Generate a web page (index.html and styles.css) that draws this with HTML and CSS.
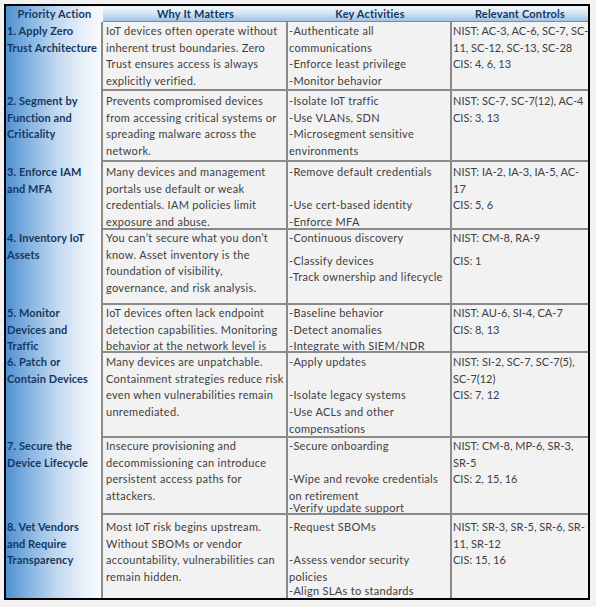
FILE: index.html
```html
<!DOCTYPE html>
<html>
<head>
<meta charset="utf-8">
<link rel="stylesheet" href="styles.css">
</head>
<body>
<div class="sheet">
  <div class="row head">
    <div class="cell c1 h">Priority Action</div>
    <div class="cell hx h">Why It Matters</div>
    <div class="cell hx h">Key Activities</div>
    <div class="cell hx h">Relevant Controls</div>
  </div>

  <div class="row r1">
    <div class="cell c1"><p>1. Apply Zero</p><p>Trust Architecture</p></div>
    <div class="cell c2"><p>IoT devices often operate without</p><p>inherent trust boundaries. Zero</p><p>Trust ensures access is always</p><p>explicitly verified.</p></div>
    <div class="cell c3"><p>-Authenticate all</p><p>communications</p><p>-Enforce least privilege</p><p>-Monitor behavior</p></div>
    <div class="cell c4"><p>NIST: AC-3, AC-6, SC-7, SC-</p><p>11, SC-12, SC-13, SC-28</p><p>CIS: 4, 6, 13</p></div>
  </div>

  <div class="row r2">
    <div class="cell c1"><p>2. Segment by</p><p>Function and</p><p>Criticality</p></div>
    <div class="cell c2"><p>Prevents compromised devices</p><p>from accessing critical systems or</p><p>spreading malware across the</p><p>network.</p></div>
    <div class="cell c3"><p>-Isolate IoT traffic</p><p>-Use VLANs, SDN</p><p>-Microsegment sensitive</p><p>environments</p></div>
    <div class="cell c4"><p>NIST: SC-7, SC-7(12), AC-4</p><p>CIS: 3, 13</p></div>
  </div>

  <div class="row r3">
    <div class="cell c1"><p>3. Enforce IAM</p><p>and MFA</p></div>
    <div class="cell c2"><p>Many devices and management</p><p>portals use default or weak</p><p>credentials. IAM policies limit</p><p>exposure and abuse.</p></div>
    <div class="cell c3"><p>-Remove default credentials</p><p class="blank"></p><p>-Use cert-based identity</p><p>-Enforce MFA</p></div>
    <div class="cell c4"><p>NIST: IA-2, IA-3, IA-5, AC-</p><p>17</p><p>CIS: 5, 6</p></div>
  </div>

  <div class="row r4">
    <div class="cell c1"><p>4. Inventory IoT</p><p>Assets</p></div>
    <div class="cell c2"><p>You can’t secure what you don’t</p><p>know. Asset inventory is the</p><p>foundation of visibility,</p><p>governance, and risk analysis.</p></div>
    <div class="cell c3"><p>-Continuous discovery</p><p class="gap">-Classify devices</p><p>-Track ownership and lifecycle</p></div>
    <div class="cell c4"><p>NIST: CM-8, RA-9</p><p class="gap">CIS: 1</p></div>
  </div>

  <div class="row r5">
    <div class="cell c1"><p>5. Monitor</p><p>Devices and</p><p>Traffic</p></div>
    <div class="cell c2"><p>IoT devices often lack endpoint</p><p>detection capabilities. Monitoring</p><p>behavior at the network level is</p></div>
    <div class="cell c3"><p>-Baseline behavior</p><p>-Detect anomalies</p><p>-Integrate with SIEM/NDR</p></div>
    <div class="cell c4"><p>NIST: AU-6, SI-4, CA-7</p><p>CIS: 8, 13</p></div>
  </div>

  <div class="row r6">
    <div class="cell c1"><p>6. Patch or</p><p>Contain Devices</p></div>
    <div class="cell c2"><p>Many devices are unpatchable.</p><p>Containment strategies reduce risk</p><p>even when vulnerabilities remain</p><p>unremediated.</p></div>
    <div class="cell c3"><p>-Apply updates</p><p class="blank"></p><p>-Isolate legacy systems</p><p>-Use ACLs and other</p><p>compensations</p></div>
    <div class="cell c4"><p>NIST: SI-2, SC-7, SC-7(5),</p><p>SC-7(12)</p><p>CIS: 7, 12</p></div>
  </div>

  <div class="row r7">
    <div class="cell c1"><p>7. Secure the</p><p>Device Lifecycle</p></div>
    <div class="cell c2"><p>Insecure provisioning and</p><p>decommissioning can introduce</p><p>persistent access paths for</p><p>attackers.</p></div>
    <div class="cell c3"><p>-Secure onboarding</p><p class="blank"></p><p>-Wipe and revoke credentials</p><p>on retirement</p><p class="tight">-Verify update support</p></div>
    <div class="cell c4"><p>NIST: CM-8, MP-6, SR-3,</p><p>SR-5</p><p>CIS: 2, 15, 16</p></div>
  </div>

  <div class="row r8">
    <div class="cell c1"><p>8. Vet Vendors</p><p>and Require</p><p>Transparency</p></div>
    <div class="cell c2"><p>Most IoT risk begins upstream.</p><p>Without SBOMs or vendor</p><p>accountability, vulnerabilities can</p><p>remain hidden.</p></div>
    <div class="cell c3"><p>-Request SBOMs</p><p class="blank"></p><p>-Assess vendor security</p><p>policies</p><p class="tight2">-Align SLAs to standards</p></div>
    <div class="cell c4"><p>NIST: SR-3, SR-5, SR-6, SR-</p><p>11, SR-12</p><p>CIS: 15, 16</p></div>
  </div>
</div>
</body>
</html>
```

FILE: styles.css
```css
* { box-sizing: border-box; }

body {
  margin: 0;
  padding: 4px;
  background: #f2f2f2;
}

.sheet {
  width: 586px;
  border: 2px solid #000;
  background: #f2f2f2;
  font-family: Lato, "Liberation Sans", sans-serif;
  font-size: 11px;
  line-height: 16.7px;
  letter-spacing: 0.3px;
  color: #404040;
}

.row {
  display: grid;
  grid-template-columns: 97px 185px 164px 136px;
}

.cell {
  overflow: hidden;
  white-space: nowrap;
}

.cell p {
  margin: 0;
  height: 16.7px;
}

.cell p.blank { height: 16.7px; }
.cell p.gap { margin-top: 6px; }
.cell p.tight { margin-top: -5px; }
.cell p.tight2 { margin-top: -3px; }

.c1 {
  padding-left: 1px;
  font-weight: bold;
  letter-spacing: 0.1px;
  color: #17375e;
  border-right: 2px solid #8a8a8a;
  background: linear-gradient(to right, #5090d2 0%, #86b5e3 25%, #c4daf0 55%, #ecf3fa 85%, #f7fafd 100%);
}

.c2 {
  padding-left: 3px;
  border-right: 2px solid #8a8a8a;
  border-bottom: 2px solid #8a8a8a;
}

.c3 {
  padding-left: 1px;
  border-right: 2px solid #8a8a8a;
  border-bottom: 2px solid #8a8a8a;
}

.c4 {
  padding-left: 1px;
  letter-spacing: 0;
  border-bottom: 2px solid #8a8a8a;
}

.r8 .c2, .r8 .c3, .r8 .c4 { border-bottom: none; }

.head { height: 16px; }

.h {
  text-align: center;
  font-weight: bold;
  color: #17375e;
  letter-spacing: 0.2px;
  line-height: 15px;
  padding-left: 0;
}

.head .c1 { border-right: none; }

.hx {
  background: linear-gradient(to bottom, #f5f8fc 0%, #d6e6f5 45%, #9fc3e7 100%);
  border-bottom: 1px solid #7f8c99;
}

.r1 { height: 69px; }
.r2 { height: 71px; }
.r3 { height: 68px; }
.r4 { height: 75px; }
.r5 { height: 48px; }
.r6 { height: 85px; }
.r7 { height: 77px; }
.r8 { height: 83px; }

.r1 .cell { padding-top: 1px; }
.r2 .cell { padding-top: 2px; }
.r3 .cell { padding-top: 2px; }
.r4 .cell { padding-top: 0; }
.r5 .cell { padding-top: 0; }
.r6 .cell { padding-top: 1px; }
.r7 .cell { padding-top: 0; }
.r8 .cell { padding-top: 4px; }
```
